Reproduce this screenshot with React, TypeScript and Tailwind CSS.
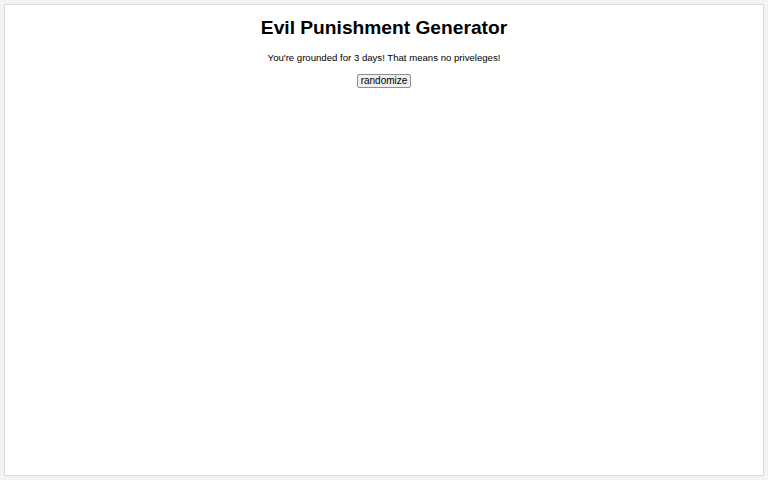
export default function App() {
  return (
    <div className="h-[480px] w-[768px] bg-[#f3f3f3] p-[4px]" style={{ fontFamily: '"Liberation Sans", Arial, sans-serif' }}>
      <div className="flex h-[472px] flex-col items-center border border-[#dcdcdc] bg-white">
        <h1 className="mt-[11px] text-[19.2px] font-bold leading-[24px] text-black">Evil Punishment Generator</h1>
        <p className="mt-[12px] text-[9.6px] leading-[12px] text-black">You're grounded for 3 days! That means no priveleges!</p>
        <button className="mt-[10px] rounded-[2px] border border-[#8f8f8f] bg-[#efefef] px-[3px] text-[10px] leading-[12px] text-black">randomize</button>
      </div>
    </div>
  );
}
